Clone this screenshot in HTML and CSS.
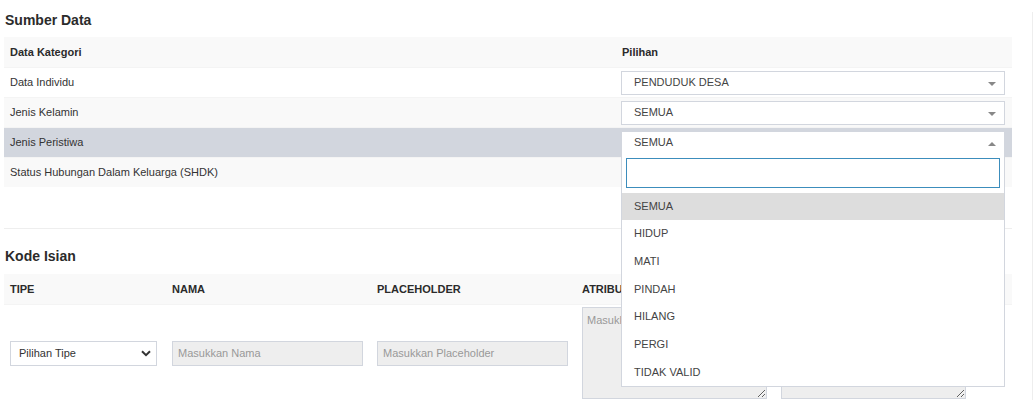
FILE: index.html
```html
<!DOCTYPE html>
<html lang="id">
<head>
<meta charset="utf-8">
<title>Sumber Data</title>
<link rel="stylesheet" href="styles.css">
</head>
<body>
<div class="page">
  <h4 class="section-title first">Sumber Data</h4>
  <div class="grid-table source">
    <div class="row head">
      <div class="cell">Data Kategori</div>
      <div class="cell">Pilihan</div>
    </div>
    <div class="row">
      <div class="cell">Data Individu</div>
      <div class="cell"><div class="s2"><span class="s2-text">PENDUDUK DESA</span><span class="s2-arrow"></span></div></div>
    </div>
    <div class="row striped">
      <div class="cell">Jenis Kelamin</div>
      <div class="cell"><div class="s2"><span class="s2-text">SEMUA</span><span class="s2-arrow"></span></div></div>
    </div>
    <div class="row active">
      <div class="cell">Jenis Peristiwa</div>
      <div class="cell">
        <div class="s2 open"><span class="s2-text">SEMUA</span><span class="s2-arrow up"></span>
          <div class="s2-dropdown">
            <div class="s2-search"><input type="text" class="s2-field"></div>
            <ul class="s2-options">
              <li class="s2-option highlighted">SEMUA</li>
              <li class="s2-option">HIDUP</li>
              <li class="s2-option">MATI</li>
              <li class="s2-option">PINDAH</li>
              <li class="s2-option">HILANG</li>
              <li class="s2-option">PERGI</li>
              <li class="s2-option">TIDAK VALID</li>
            </ul>
          </div>
        </div>
      </div>
    </div>
    <div class="row striped">
      <div class="cell">Status Hubungan Dalam Keluarga (SHDK)</div>
      <div class="cell"><div class="s2"><span class="s2-text">SEMUA</span><span class="s2-arrow"></span></div></div>
    </div>
  </div>

  <hr class="divider">

  <h4 class="section-title">Kode Isian</h4>
  <div class="grid-table kode">
    <div class="row head">
      <div class="cell">TIPE</div>
      <div class="cell">NAMA</div>
      <div class="cell">PLACEHOLDER</div>
      <div class="cell">ATRIBUT</div>
      <div class="cell">PILIHAN</div>
    </div>
    <div class="row form-row">
      <div class="cell">
        <div class="native-select"><span>Pilihan Tipe</span>
          <svg class="chev" width="10" height="7" viewBox="0 0 10 7"><polyline points="1,1.2 5,5.2 9,1.2" fill="none" stroke="#333" stroke-width="2"/></svg>
        </div>
      </div>
      <div class="cell"><input class="ctl" type="text" placeholder="Masukkan Nama" disabled></div>
      <div class="cell"><input class="ctl" type="text" placeholder="Masukkan Placeholder" disabled></div>
      <div class="cell"><textarea class="area" placeholder="Masukkan Atribut" disabled></textarea></div>
      <div class="cell"><textarea class="area" placeholder="Masukkan Pilihan" disabled></textarea></div>
    </div>
  </div>
</div>
</body>
</html>
```
FILE: styles.css
```css
html, body {
  margin: 0;
  padding: 0;
  background: #fff;
  overflow: hidden;
  height: 400px;
}
body {
  font-family: "Liberation Sans", Arial, sans-serif;
  font-size: 11px;
  color: #333;
}
.page {
  width: 1008px;
  padding: 0 20px 0 4px;
  border-right: 1px solid #eeeeee;
  height: 400px;
}
.section-title {
  margin: 19px 0 10px 1px;
  font-size: 14px;
  line-height: 16px;
  font-weight: bold;
  color: #2b2b2b;
}
.section-title.first {
  margin-top: 12px;
  margin-bottom: 9px;
}
.grid-table .row {
  display: grid;
  height: 30px;
  box-sizing: border-box;
  align-items: center;
  border-top: 1px solid #f4f4f4;
}
.grid-table .row.head {
  border-top: none;
  background: #f9f9f9;
  font-weight: bold;
  color: #2b2b2b;
}
.source .row { grid-template-columns: 612px 396px; }
.source .cell { padding-left: 5px; line-height: 15px; }
.source .row.head .cell { padding-left: 6px; }
.source .row .cell:first-child { padding-left: 6px; }
.row.striped { background: #f9f9f9; }
.row.active { background: #d2d6de; }

.s2 {
  position: relative;
  width: 384px;
  height: 24px;
  box-sizing: border-box;
  border: 1px solid #d2d6de;
  background: #fff;
  color: #444;
  display: flex;
  align-items: center;
  padding-left: 12px;
}
.s2-text { line-height: 15px; }
.s2-arrow {
  position: absolute;
  right: 8px;
  top: 50%;
  margin-top: -1px;
  width: 0;
  height: 0;
  border-style: solid;
  border-width: 4px 4px 0 4px;
  border-color: #888 transparent transparent transparent;
}
.s2-arrow.up {
  border-width: 0 4px 4px 4px;
  border-color: transparent transparent #888 transparent;
}
.s2-dropdown {
  position: absolute;
  left: -1px;
  top: 100%;
  width: 384px;
  box-sizing: border-box;
  border: 1px solid #d2d6de;
  border-top: none;
  background: #fff;
  z-index: 10;
}
.s2-search { padding: 4px 4px 5px 4px; }
.s2-field {
  display: block;
  width: 100%;
  height: 30px;
  box-sizing: border-box;
  border: 1px solid #3c8dbc;
  margin: 0;
  padding: 4px;
  font: 11px "Liberation Sans", Arial, sans-serif;
  outline: none;
  background: #fff;
}
.s2-options {
  list-style: none;
  margin: 0;
  padding: 0;
}
.s2-option {
  padding: 6px 12px;
  line-height: 15.71px;
  color: #444;
}
.s2-option.highlighted {
  background: #dddddd;
}

.divider {
  margin: 41px 0 0 0;
  border: 0;
  border-top: 1px solid #eeeeee;
  height: 0;
}

.kode .row { grid-template-columns: 162px 205px 205px 199px 237px; }
.kode .cell { padding-left: 6px; }
.kode .row.head .cell { line-height: 15px; }
.kode .row.form-row {
  height: auto;
  padding: 2px 0;
}
.native-select {
  width: 147px;
  height: 25px;
  box-sizing: border-box;
  border: 1px solid #d2d6de;
  background: #fff;
  display: flex;
  align-items: center;
  justify-content: space-between;
  padding: 0 5px 1px 8px;
  color: #333;
}
.chev { display: block; margin-top: 2px; }
.ctl {
  display: block;
  width: 191px;
  height: 25px;
  box-sizing: border-box;
  border: 1px solid #d2d6de;
  background: #eeeeee;
  padding: 0 5px;
  margin: 0;
  font: 11px "Liberation Sans", Arial, sans-serif;
  color: #555;
}
.ctl::placeholder, .area::placeholder { color: #999; opacity: 1; }
.area {
  display: block;
  width: 185px;
  height: 92px;
  box-sizing: border-box;
  border: 1px solid #d2d6de;
  background: #eeeeee;
  padding: 6px 4px;
  margin: 0;
  font: 11px "Liberation Sans", Arial, sans-serif;
  resize: vertical;
}
```
